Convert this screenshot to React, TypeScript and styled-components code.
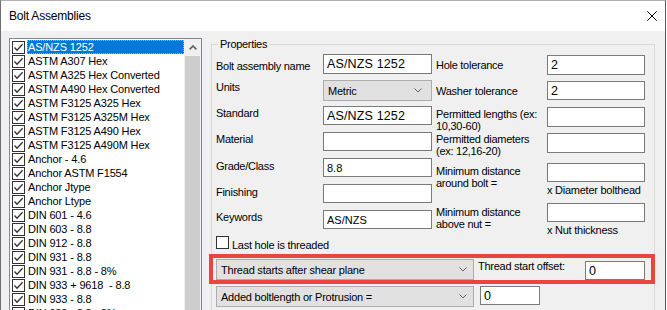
import React from 'react';
import styled, { createGlobalStyle } from 'styled-components';

const GlobalStyle = createGlobalStyle`
  html, body { margin: 0; padding: 0; background: #ffffff; overflow: hidden; }
  body { font-family: "Liberation Sans", Arial, sans-serif; color: #000; }
  *, *::before, *::after { box-sizing: border-box; }
`;

const Window = styled.div`
  width: 666px;
  height: 310px;
  display: flex;
  flex-direction: column;
  background: #f0f0f0;
  border-top: 1px solid #b0b0b0;
  border-left: 1px solid #707070;
  border-right: 1px solid #5c5c5c;
  overflow: hidden;
`;

const TitleBar = styled.div`
  height: 30px;
  flex: none;
  background: #ffffff;
  display: flex;
  align-items: center;
  justify-content: space-between;
  padding: 0 8px 0 8px;
`;

const TitleText = styled.span`
  font-size: 12px;
  letter-spacing: -0.2px;
  color: #000;
`;

const Body = styled.div`
  flex: 1;
  min-height: 0;
  display: flex;
  align-items: flex-start;
  padding: 7px 0 0 8px;
`;

const ListBox = styled.div`
  width: 193px;
  height: 290px;
  flex: none;
  display: flex;
  background: #ffffff;
  border: 1px solid #828790;
`;

const ListItems = styled.div`
  flex: 1;
  min-width: 0;
  display: flex;
  flex-direction: column;
  padding-top: 1px;
  overflow: hidden;
`;

const ListRow = styled.div`
  height: 14px;
  flex: none;
  display: flex;
  align-items: center;
  gap: 2px;
  padding-left: 2px;
`;

const Box = styled.span`
  width: 13px;
  height: 13px;
  flex: none;
  display: flex;
  align-items: center;
  justify-content: center;
  background: #ffffff;
  border: 1px solid #333333;
`;

const ItemText = styled.span<{ $selected?: boolean }>`
  flex: 1;
  height: 14px;
  line-height: 14px;
  padding-left: 1px;
  font-size: 11px;
  letter-spacing: -0.15px;
  white-space: pre;
  color: ${(p) => (p.$selected ? '#ffffff' : '#000000')};
  background: ${(p) => (p.$selected ? '#0078d7' : 'transparent')};
  outline: ${(p) => (p.$selected ? '1px dotted #f0a23a' : 'none')};
  outline-offset: -1px;
`;

const ScrollBar = styled.div`
  width: 17px;
  flex: none;
  display: flex;
  flex-direction: column;
  background: #f0f0f0;
`;

const ScrollButton = styled.div`
  height: 17px;
  flex: none;
  display: flex;
  align-items: center;
  justify-content: center;
`;

const ScrollThumb = styled.div`
  flex: 1;
  margin: 0 1px;
  background: #cdcdcd;
`;

const GroupBox = styled.fieldset`
  margin: 0 0 0 9px;
  padding: 3px 9px 0 4px;
  width: 444px;
  height: 300px;
  min-width: 0;
  border: 1px solid #d9d9d9;
  flex: none;
`;

const Legend = styled.legend`
  font-size: 11px;
  line-height: 13px;
  letter-spacing: -0.3px;
  padding: 0 2px;
  margin-left: 2px;
`;

const GroupContent = styled.div`
  display: flex;
  flex-direction: column;
`;

const Columns = styled.div`
  display: flex;
  align-items: flex-start;
  gap: 4px;
`;

const LeftColumn = styled.div`
  width: 216px;
  flex: none;
  display: flex;
  flex-direction: column;
  gap: 6px;
`;

const RightColumn = styled.div`
  width: 209px;
  flex: none;
  margin-top: 1px;
  display: flex;
  flex-direction: column;
`;

const FieldRow = styled.div<{ $h?: number }>`
  display: flex;
  align-items: flex-start;
  height: ${(p) => (p.$h ? `${p.$h}px` : 'auto')};
  flex: none;
`;

const FieldLabel = styled.div<{ $w: number; $pt: number; $lh?: number }>`
  width: ${(p) => p.$w}px;
  flex: none;
  padding-top: ${(p) => p.$pt}px;
  font-size: 11px;
  line-height: ${(p) => p.$lh ?? 13}px;
  letter-spacing: -0.27px;
  white-space: nowrap;
`;

const TextInput = styled.input<{ $w: number; $h?: number; $fs?: number; $mt?: number }>`
  width: ${(p) => p.$w}px;
  height: ${(p) => p.$h ?? 19}px;
  margin: ${(p) => p.$mt ?? 0}px 0 0 0;
  flex: none;
  padding: 0 3px;
  border: 1px solid #7a7a7a;
  border-radius: 0;
  background: #ffffff;
  color: #000;
  font-family: "Liberation Sans", Arial, sans-serif;
  font-size: ${(p) => p.$fs ?? 11}px;
  letter-spacing: ${(p) => ((p.$fs ?? 11) > 11 ? '0.15px' : '0px')};
  outline: none;
`;

const Combo = styled.div<{ $w: number; $pr: number; $mt?: number }>`
  width: ${(p) => p.$w}px;
  height: 21px;
  flex: none;
  margin-top: ${(p) => p.$mt ?? 0}px;
  display: flex;
  align-items: center;
  justify-content: space-between;
  padding: 0 ${(p) => p.$pr}px 0 4px;
  background: #e1e1e1;
  border: 1px solid #adadad;
  font-size: 11px;
  letter-spacing: -0.22px;
  white-space: nowrap;
`;

const FieldStack = styled.div`
  display: flex;
  flex-direction: column;
`;

const Caption = styled.div`
  margin-top: 2px;
  font-size: 11px;
  line-height: 12px;
  letter-spacing: -0.25px;
  white-space: nowrap;
`;

const CheckRow = styled.div`
  height: 14px;
  display: flex;
  align-items: flex-start;
  gap: 3px;
`;

const CheckLabel = styled.span`
  margin-top: 3px;
  font-size: 11px;
  line-height: 13px;
  letter-spacing: -0.25px;
`;

const HighlightRow = styled.div`
  width: 446px;
  height: 30px;
  margin: 4px 0 0 -7px;
  padding-left: 3px;
  display: flex;
  align-items: flex-start;
  border: 4px solid #e8463e;
`;

const InlineLabel = styled.span<{ $w: number }>`
  width: ${(p) => p.$w}px;
  flex: none;
  margin: 2px 0 0 4px;
  font-size: 11px;
  line-height: 13px;
  letter-spacing: -0.27px;
  white-space: nowrap;
`;

const BottomRow = styled.div`
  margin-top: 2px;
  display: flex;
  align-items: flex-start;
  gap: 6px;
`;

const CheckMark = () => (
  <svg width="11" height="11" viewBox="0 0 11 11">
    <polyline points="1.5,5.5 4,8.2 9.6,2.2" fill="none" stroke="#333" strokeWidth="1.3" />
  </svg>
);

const Chevron = () => (
  <svg width="8" height="5" viewBox="0 0 8 5">
    <polyline points="0.5,0.5 4,4 7.5,0.5" fill="none" stroke="#606060" strokeWidth="1" />
  </svg>
);

const UpArrow = () => (
  <svg width="8" height="5" viewBox="0 0 8 5">
    <polyline points="0.6,4.4 4,1 7.4,4.4" fill="none" stroke="#606060" strokeWidth="1.6" />
  </svg>
);

const CloseIcon = () => (
  <svg width="10" height="10" viewBox="0 0 10 10">
    <line x1="0.3" y1="0.3" x2="9.7" y2="9.7" stroke="#000" strokeWidth="1" />
    <line x1="9.7" y1="0.3" x2="0.3" y2="9.7" stroke="#000" strokeWidth="1" />
  </svg>
);

const items = [
  'AS/NZS 1252',
  'ASTM A307 Hex',
  'ASTM A325 Hex Converted',
  'ASTM A490 Hex Converted',
  'ASTM F3125 A325 Hex',
  'ASTM F3125 A325M Hex',
  'ASTM F3125 A490 Hex',
  'ASTM F3125 A490M Hex',
  'Anchor - 4.6',
  'Anchor ASTM F1554',
  'Anchor Jtype',
  'Anchor Ltype',
  'DIN 601 - 4.6',
  'DIN 603 - 8.8',
  'DIN 912 - 8.8',
  'DIN 931 - 8.8',
  'DIN 931 - 8.8 - 8%',
  'DIN 933 + 9618  - 8.8',
  'DIN 933 - 8.8',
  'DIN 933 - 8.8 - 8%',
  'DIN 933 - 10.9',
];

type LeftField = { label: string; pt: number; value?: string; fs?: number; combo?: boolean; h?: number };

const leftFields: LeftField[] = [
  { label: 'Bolt assembly name', pt: 5.5, value: 'AS/NZS 1252', fs: 12.5, h: 20 },
  { label: 'Units', pt: 1, value: 'Metric', combo: true },
  { label: 'Standard', pt: 1, value: 'AS/NZS 1252', fs: 12.5 },
  { label: 'Material', pt: 1, value: '' },
  { label: 'Grade/Class', pt: 2, value: '8.8' },
  { label: 'Finishing', pt: 2, value: '' },
  { label: 'Keywords', pt: 0.5, value: 'AS/NZS' },
];

type RightField = { lines: string[]; pt: number; h?: number; value?: string; inputH?: number; caption?: string };

const rightFields: RightField[] = [
  { lines: ['Hole tolerance'], pt: 4, h: 26, value: '2', inputH: 20 },
  { lines: ['Washer tolerance'], pt: 4, h: 26, value: '2' },
  { lines: ['Permitted lengths (ex:', '10,30-60)'], pt: 1, h: 26, value: '', inputH: 20 },
  { lines: ['Permitted diameters', '(ex: 12,16-20)'], pt: 0, h: 30, value: '', inputH: 20 },
  { lines: ['Minimum distance', 'around bolt ='], pt: 2, h: 40, value: '', caption: 'x Diameter bolthead' },
  { lines: ['Minimum distance', 'above nut ='], pt: 3, value: '', caption: 'x Nut thickness' },
];

export default function App() {
  return (
    <>
      <GlobalStyle />
      <Window>
        <TitleBar>
          <TitleText>Bolt Assemblies</TitleText>
          <CloseIcon />
        </TitleBar>
        <Body>
          <ListBox>
            <ListItems>
              {items.map((name, i) => (
                <ListRow key={name + i}>
                  <Box>
                    <CheckMark />
                  </Box>
                  <ItemText $selected={i === 0}>{name}</ItemText>
                </ListRow>
              ))}
            </ListItems>
            <ScrollBar>
              <ScrollButton>
                <UpArrow />
              </ScrollButton>
              <ScrollThumb />
            </ScrollBar>
          </ListBox>
          <GroupBox>
            <Legend>Properties</Legend>
            <GroupContent>
              <Columns>
                <LeftColumn>
                  {leftFields.map((f) => (
                    <FieldRow key={f.label} $h={20}>
                      <FieldLabel $w={107} $pt={f.pt}>
                        {f.label}
                      </FieldLabel>
                      {f.combo ? (
                        <Combo $w={109} $pr={9}>
                          <span>{f.value}</span>
                          <Chevron />
                        </Combo>
                      ) : (
                        <TextInput $w={109} $h={f.h} $fs={f.fs} readOnly value={f.value} />
                      )}
                    </FieldRow>
                  ))}
                </LeftColumn>
                <RightColumn>
                  {rightFields.map((f) => (
                    <FieldRow key={f.lines.join(' ')} $h={f.h}>
                      <FieldLabel $w={111} $pt={f.pt} $lh={12}>
                        {f.lines.map((l, i) => (
                          <React.Fragment key={l}>
                            {i > 0 && <br />}
                            {l}
                          </React.Fragment>
                        ))}
                      </FieldLabel>
                      <FieldStack>
                        <TextInput $w={98} $h={f.inputH} $fs={12.5} readOnly value={f.value} />
                        {f.caption && <Caption>{f.caption}</Caption>}
                      </FieldStack>
                    </FieldRow>
                  ))}
                </RightColumn>
              </Columns>
              <CheckRow>
                <Box />
                <CheckLabel>Last hole is threaded</CheckLabel>
              </CheckRow>
              <HighlightRow>
                <Combo $w={258} $pr={6} $mt={1}>
                  <span>Thread starts after shear plane</span>
                  <Chevron />
                </Combo>
                <InlineLabel $w={107}>Thread start offset:</InlineLabel>
                <TextInput $w={60} $fs={12.5} $mt={3} readOnly value="0" />
              </HighlightRow>
              <BottomRow>
                <Combo $w={258} $pr={6}>
                  <span>Added boltlength or Protrusion =</span>
                  <Chevron />
                </Combo>
                <TextInput $w={60} $fs={12.5} readOnly value="0" />
              </BottomRow>
            </GroupContent>
          </GroupBox>
        </Body>
      </Window>
    </>
  );
}
